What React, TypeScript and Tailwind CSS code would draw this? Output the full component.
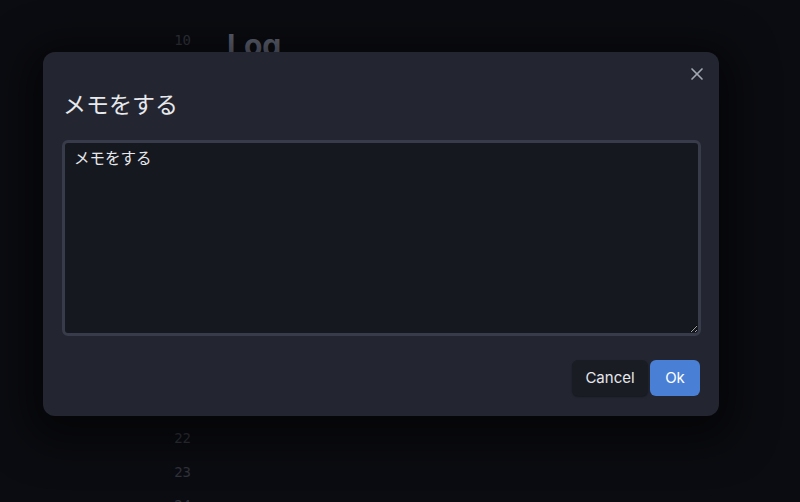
import { X } from 'lucide-react';

const lines = Array.from({ length: 15 }, (_, i) => i + 10);

export default function App() {
  return (
    <div className="relative h-[502px] w-[800px] overflow-hidden bg-[#0b0c11] font-['Inter','Noto_Sans_CJK_JP',sans-serif]">
      {/* Editor behind the dialog */}
      <div className="flex flex-col pt-[24px]">
        {lines.map((n) => (
          <div key={n} className="flex h-[33.2px] items-center">
            <span className="w-[191px] text-right font-['DejaVu_Sans_Mono',monospace] text-[14px] text-[#30333d]">
              {n}
            </span>
            {n === 10 && (
              <span className="ml-[36px] mt-[10px] text-[30px] font-bold text-[#5c6170]">Log</span>
            )}
          </div>
        ))}
      </div>

      {/* Dialog */}
      <div className="absolute left-[43px] top-[52px] w-[676px] rounded-xl bg-[#232631] pb-[20px] pl-[19px] pr-[18px] pt-[35px] shadow-[0_10px_40px_16px_rgba(0,0,0,0.55)]">
        <button className="absolute right-[12px] top-[12px] text-[#a2a7b3]">
          <X size={20} strokeWidth={2} />
        </button>
        <h2 className="pl-[1px] text-[23px] leading-[33px] font-normal text-[#e8e9ec] font-['Noto_Sans_CJK_JP',sans-serif]">
          メモをする
        </h2>
        <textarea
          autoFocus
          defaultValue="メモをする"
          className="mt-[20px] block h-[196px] w-full rounded-md border-[3px] border-[#373b4a] bg-[#161820] px-[9px] py-[3px] text-[15.5px] leading-[22px] text-[#e5e7eb] outline-none font-['Noto_Sans_CJK_JP',sans-serif]"
        />
        <div className="mr-[1px] mt-[24px] flex justify-end gap-[2px]">
          <button className="h-[36px] w-[76px] rounded-md bg-[#1a1c23] text-[15px] text-[#e5e7eb] shadow-[0_1px_2px_rgba(0,0,0,0.4)]">
            Cancel
          </button>
          <button className="h-[36px] w-[50px] rounded-md bg-[#4a7fd6] text-[15px] text-white">
            Ok
          </button>
        </div>
      </div>
    </div>
  );
}
